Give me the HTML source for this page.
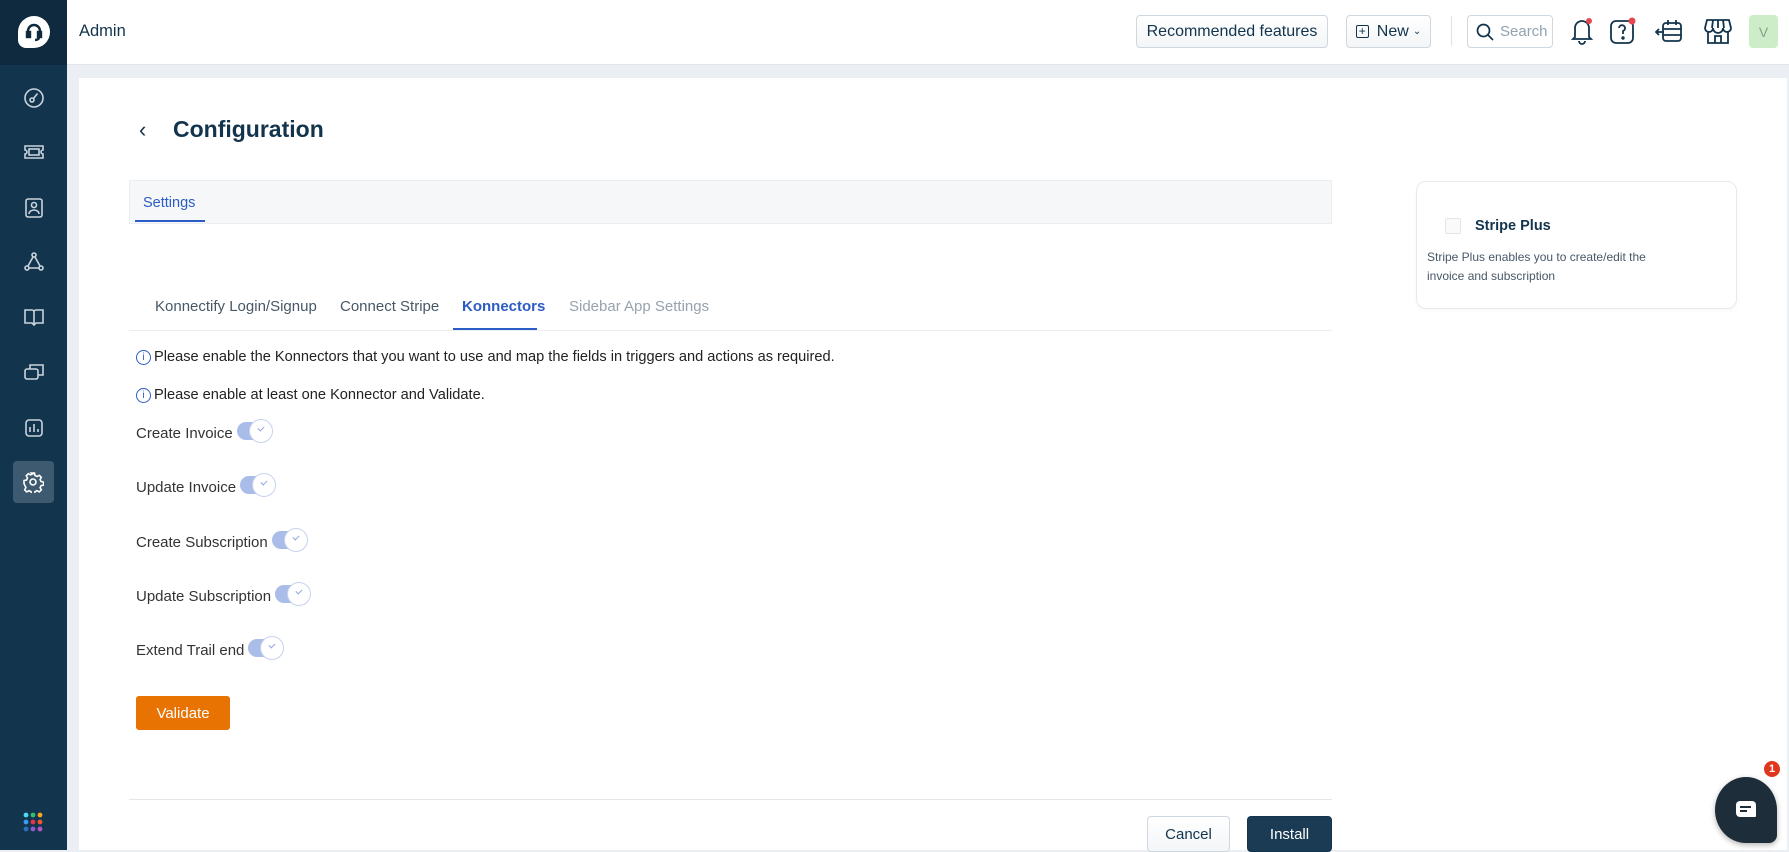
<!DOCTYPE html>
<html><head><meta charset="utf-8"><style>
*{box-sizing:border-box;margin:0;padding:0}
body{width:1789px;height:850px;overflow:hidden;font-family:"Liberation Sans",sans-serif;background:#ebeef3;position:relative;color:#12344d}
.abs{position:absolute}
#side{left:0;top:0;width:67px;height:850px;background:#12344d}
#logo{left:0;top:0;width:67px;height:65px;background:#0f2a3e}
#hdr{left:67px;top:0;width:1722px;height:65px;background:#fff;border-bottom:1px solid #e3e7ec}
.btn{position:absolute;border:1px solid #cfd7df;border-radius:4px;background:linear-gradient(#fff,#f3f5f7);font-size:16px;display:flex;align-items:center;justify-content:center;color:#12344d}
#main{left:79px;top:78px;width:1708px;height:772px;background:#fff}
.tab{position:absolute;top:298px;font-size:15px;color:#475867}
.row{position:absolute;left:136px;font-size:15px;color:#333;display:flex;align-items:center;gap:4px}
.tg{position:relative;width:34px;height:18px;border-radius:9px;background:#a9bde8;margin-top:-6px}
.tg i{position:absolute;right:-2px;top:-3px;width:24px;height:24px;border-radius:50%;background:#fff;border:1px solid #c6d2ee}
.tg i:after{content:"";position:absolute;left:8px;top:6px;width:5px;height:3px;border-left:1.3px solid #8aa3dd;border-bottom:1.3px solid #8aa3dd;transform:rotate(-45deg)}
.info{position:absolute;left:136px;font-size:14.6px;color:#222;display:flex;align-items:center;gap:3px}
.info b{width:15px;height:15px;border:1.3px solid #2c5cc5;border-radius:50%;color:#2c5cc5;font-size:10px;display:flex;align-items:center;justify-content:center;font-weight:normal}
svg.ic{position:absolute;fill:none;stroke:#c9d3dc;stroke-width:1.6}
</style></head><body>
<div id="side" class="abs"></div>
<div id="logo" class="abs"></div>
<div class="abs" style="left:18px;top:16px;width:32px;height:32px;background:#fff;border-radius:50% 50% 50% 8px/50% 50% 50% 8px"></div>
<svg class="abs" style="left:23px;top:21px" width="22" height="22" viewBox="0 0 22 22" fill="none" stroke="#0f2a3e" stroke-width="2.4"><path d="M5 13v-3a6 6 0 0 1 12 0v3"/><rect x="4" y="11" width="3" height="5" fill="#0f2a3e"/><rect x="15" y="11" width="3" height="5" fill="#0f2a3e"/><path d="M16 16q0 3-4 3"/></svg>
<svg class="ic" style="left:23px;top:87px" width="22" height="22"><circle cx="11" cy="11" r="9"/><circle cx="9" cy="13" r="2"/><path d="M10.5 11.5l4-5"/></svg>
<svg class="ic" style="left:23px;top:141px" width="22" height="22"><path d="M2 5h18v4a2 2 0 0 0 0 4v4H2v-4a2 2 0 0 0 0-4z"/><rect x="6" y="8" width="10" height="6"/></svg>
<svg class="ic" style="left:23px;top:197px" width="22" height="22"><rect x="3" y="2" width="16" height="18" rx="2"/><circle cx="11" cy="8" r="2.5"/><path d="M6 17a5 4 0 0 1 10 0"/></svg>
<svg class="ic" style="left:23px;top:251px" width="22" height="22"><circle cx="11" cy="4" r="2"/><circle cx="4" cy="17" r="2"/><circle cx="18" cy="17" r="2"/><path d="M10 6l-5 9M12 6l5 9M6 17h10"/></svg>
<svg class="ic" style="left:23px;top:306px" width="22" height="22"><path d="M11 5v13M2 4h7a2 2 0 0 1 2 2 2 2 0 0 1 2-2h7v13h-7l-2 2-2-2H2z"/></svg>
<svg class="ic" style="left:23px;top:361px" width="22" height="22"><rect x="2" y="8" width="13" height="10" rx="2"/><path d="M7 8V4h13v10h-5"/></svg>
<svg class="ic" style="left:23px;top:417px" width="22" height="22"><rect x="3" y="3" width="16" height="16" rx="3"/><path d="M7 15V10M11 15V7M15 15v-3"/></svg>
<div class="abs" style="left:13px;top:461px;width:41px;height:42px;background:#3d5a70;border-radius:4px"></div>
<svg class="ic" style="left:22px;top:471px;stroke:#fff" width="22" height="22"><circle cx="11" cy="11" r="3"/><path d="M9.5 2h3l.5 2.5 2 1 2.3-1.2 2 2-1.2 2.3 1 2 2.5.5v3l-2.5.5-1 2 1.2 2.3-2 2-2.3-1.2-2 1-.5 2.5h-3l-.5-2.5-2-1-2.3 1.2-2-2 1.2-2.3-1-2L2 12.5v-3l2.5-.5 1-2-1.2-2.3 2-2 2.3 1.2 2-1z"/></svg>
<svg class="abs" style="left:23px;top:812px" width="22" height="22"><g><circle cx="3" cy="3" r="2.4" fill="#4dd9f0"/><circle cx="10" cy="3" r="2.4" fill="#2fbf71"/><circle cx="17" cy="3" r="2.4" fill="#f5a623"/><circle cx="3" cy="10" r="2.4" fill="#3a9cf0"/><circle cx="10" cy="10" r="2.4" fill="#e0364a"/><circle cx="17" cy="10" r="2.4" fill="#f0582a"/><circle cx="3" cy="17" r="2.4" fill="#2a6fc0"/><circle cx="10" cy="17" r="2.4" fill="#8a5ac8"/><circle cx="17" cy="17" r="2.4" fill="#b455c8"/></g></svg>

<div id="hdr" class="abs"></div>
<div class="abs" style="left:79px;top:22px;font-size:16.5px;color:#12344d">Admin</div>
<div class="btn" style="left:1136px;top:15px;width:192px;height:33px;font-weight:500">Recommended features</div>
<div class="btn" style="left:1346px;top:15px;width:85px;height:33px"><span style="border:1.4px solid #12344d;width:13px;height:13px;font-size:12px;line-height:10px;text-align:center;margin-right:8px;border-radius:2px">+</span>New <span style="font-size:10px;margin-left:4px">&#8964;</span></div>
<div class="abs" style="left:1451px;top:16px;width:1px;height:30px;background:#dfe3e8"></div>
<div class="btn" style="left:1467px;top:15px;width:86px;height:33px;background:#fff;color:#92a2b1;justify-content:flex-start;padding-left:8px;font-size:15px"><svg width="18" height="18" fill="none" stroke="#12344d" stroke-width="1.7" style="margin-right:6px"><circle cx="7.5" cy="7.5" r="6"/><path d="M12 12l5 5"/></svg>Search</div>
<svg class="abs" style="left:1570px;top:17px" width="24" height="28" fill="none" stroke="#12344d" stroke-width="1.8"><path d="M5 20V11a7 7 0 0 1 14 0v9l2 2H3z"/><path d="M9 24a3 3 0 0 0 6 0"/><circle cx="19" cy="4" r="3" fill="#e5484d" stroke="none"/></svg>
<svg class="abs" style="left:1609px;top:17px" width="28" height="28" fill="none" stroke="#12344d" stroke-width="1.8"><rect x="2" y="4" width="22" height="22" rx="5"/><path d="M10 11a3 3 0 1 1 4 3v3"/><circle cx="14" cy="21" r=".8" fill="#12344d"/><circle cx="23" cy="4" r="3.5" fill="#e5484d" stroke="none"/></svg>
<svg class="abs" style="left:1655px;top:18px" width="30" height="26" fill="none" stroke="#12344d" stroke-width="1.8"><rect x="8" y="5" width="18" height="18" rx="3"/><path d="M8 11h18M8 17h18M13 2v5M21 2v5M1 14h8M4 11l-3 3 3 3"/></svg>
<svg class="abs" style="left:1703px;top:16px" width="30" height="30" fill="none" stroke="#12344d" stroke-width="1.8"><path d="M4 4h22l2 8a4 4 0 0 1-8 0 4 4 0 0 1-10 0 4 4 0 0 1-8 0z M10 4l-1 8M20 4l1 8M15 4v8M5 15v12h20V15M12 27v-7h6v7"/></svg>
<div class="abs" style="left:1749px;top:15px;width:29px;height:33px;background:#cdedc9;border-radius:4px;color:#8aa08a;font-size:14px;display:flex;align-items:center;justify-content:center">V</div>

<div id="main" class="abs"></div>
<div class="abs" style="left:139px;top:117px;font-size:22px;color:#12344d">&#8249;</div>
<div class="abs" style="left:173px;top:116px;font-size:23px;font-weight:bold;color:#12344d">Configuration</div>
<div class="abs" style="left:129px;top:180px;width:1203px;height:44px;background:#f5f7f9;border:1px solid #ebeef0"></div>
<div class="abs" style="left:143px;top:195px;font-size:14.5px;color:#2c5cc5">Settings</div>
<div class="abs" style="left:135px;top:220px;width:70px;height:2px;background:#2c5cc5"></div>

<div class="abs" style="left:129px;top:330px;width:1203px;height:1px;background:#ebeef0"></div>
<div class="tab" style="left:155px">Konnectify Login/Signup</div>
<div class="tab" style="left:340px">Connect Stripe</div>
<div class="tab" style="left:462px;color:#2c5cc5;font-weight:bold">Konnectors</div>
<div class="tab" style="left:569px;color:#97a3ae">Sidebar App Settings</div>
<div class="abs" style="left:453px;top:328px;width:84px;height:2px;background:#2c5cc5"></div>

<div class="info" style="top:349px"><b>i</b>Please enable the Konnectors that you want to use and map the fields in triggers and actions as required.</div>
<div class="info" style="top:387px"><b>i</b>Please enable at least one Konnector and Validate.</div>

<div class="row" style="top:425px">Create Invoice<span class="tg"><i></i></span></div>
<div class="row" style="top:479px">Update Invoice<span class="tg"><i></i></span></div>
<div class="row" style="top:534px">Create Subscription<span class="tg"><i></i></span></div>
<div class="row" style="top:588px">Update Subscription<span class="tg"><i></i></span></div>
<div class="row" style="top:642px">Extend Trail end<span class="tg"><i></i></span></div>

<div class="abs" style="left:136px;top:696px;width:94px;height:34px;background:#e87302;border-radius:3px;color:#fff;font-size:15px;display:flex;align-items:center;justify-content:center">Validate</div>

<div class="abs" style="left:129px;top:799px;width:1203px;height:1px;background:#e3e7ec"></div>
<div class="btn" style="left:1147px;top:816px;width:83px;height:36px;font-size:15px">Cancel</div>
<div class="btn" style="left:1247px;top:816px;width:85px;height:36px;background:#1b3b55;border-color:#12344d;color:#fff;font-weight:500;font-size:15px">Install</div>

<div class="abs" style="left:1416px;top:181px;width:321px;height:128px;border:1px solid #e6eaee;border-radius:10px;box-shadow:0 2px 4px rgba(0,0,0,.03)"></div>
<div class="abs" style="left:1445px;top:218px;width:16px;height:16px;border:1px solid #e3e6e9;border-radius:2px;background:#fafafa"></div>
<div class="abs" style="left:1475px;top:218px;font-size:14.5px;font-weight:bold;color:#12344d">Stripe Plus</div>
<div class="abs" style="left:1427px;top:248px;width:255px;font-size:12px;line-height:19px;color:#475867">Stripe Plus enables you to create/edit the invoice and subscription</div>

<div class="abs" style="left:1715px;top:777px;width:62px;height:66px;background:#1e2d3a;border-radius:50% 50% 8px 50%;box-shadow:0 2px 6px rgba(0,0,0,.3)"></div>
<div class="abs" style="left:1736px;top:801px;width:20px;height:16px;background:#fff;border-radius:4px 4px 1px 4px"></div>
<div class="abs" style="left:1740px;top:806px;width:11px;height:2px;background:#1e2d3a"></div>
<div class="abs" style="left:1740px;top:810px;width:7px;height:2px;background:#1e2d3a"></div>
<div class="abs" style="left:1762px;top:759px;width:20px;height:20px;background:#e0361e;border:2px solid #fff;border-radius:50%;color:#fff;font-size:11px;font-weight:bold;display:flex;align-items:center;justify-content:center">1</div>
</body></html>
